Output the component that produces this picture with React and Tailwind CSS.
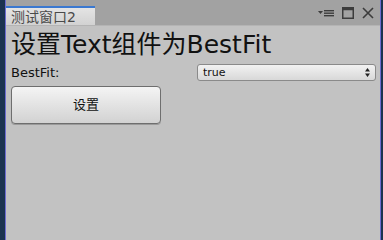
export default function App() {
  return (
    <div className="w-[383px] h-[240px] flex bg-[#1b3350] overflow-hidden" style={{ fontFamily: '"DejaVu Sans", "Noto Sans CJK SC", sans-serif' }}>
      <div className="w-[5px] shrink-0 bg-[#1b3350]" />
      <div className="w-[1px] shrink-0 bg-[#6c6cd0]" />
      <div className="flex-1 flex flex-col min-w-0">
        <div className="h-[25px] shrink-0 bg-[#a2a2a2] flex items-end relative">
          <div className="w-[89px] h-[19px] flex flex-col bg-gradient-to-b from-[#e6e6e6] to-[#d2d2d2]">
            <div className="h-[2px] bg-[#3a78d0]" />
            <div className="flex-1 flex items-center pl-[5px] text-[14px] leading-none text-[#4a4a4a]">测试窗口2</div>
          </div>
          <div className="absolute right-[6px] top-[7px] flex items-center gap-[8px]">
            <svg width="16" height="8" viewBox="0 0 16 8">
              <path d="M0 2 L5 2 L2.5 5 Z" fill="#3c3c3c" />
              <rect x="6" y="1" width="10" height="1.4" fill="#3c3c3c" />
              <rect x="6" y="3.5" width="10" height="1.4" fill="#3c3c3c" />
              <rect x="6" y="6" width="10" height="1.4" fill="#3c3c3c" />
            </svg>
            <svg width="12" height="12" viewBox="0 0 12 12">
              <rect x="0.75" y="0.75" width="10.5" height="10.5" fill="none" stroke="#3c3c3c" strokeWidth="1.5" />
              <rect x="0.75" y="0.75" width="10.5" height="2.5" fill="#3c3c3c" />
            </svg>
            <svg width="12" height="12" viewBox="0 0 12 12">
              <path d="M1 1 L11 11 M11 1 L1 11" stroke="#3c3c3c" strokeWidth="1.6" />
            </svg>
          </div>
        </div>
        <div className="h-[1px] bg-[#b4b4b4]" />
        <div className="flex-1 bg-[#c2c2c2] flex flex-col pl-[5px] pr-[4px]">
          <div className="mt-[5px] text-[25px] leading-[28px] text-[#111] whitespace-nowrap">设置Text组件为BestFit</div>
          <div className="mt-[4px] flex items-center h-[18px]">
            <div className="w-[186px] text-[13px] leading-none text-[#111]">BestFit:</div>
            <div className="flex-1 h-[17px] rounded-[3px] border border-[#8a8a8a] bg-gradient-to-b from-[#f2f2f2] to-[#d8d8d8] flex items-center px-[5px]">
              <span className="flex-1 text-[11px] leading-none text-[#111]">true</span>
              <svg width="5" height="9" viewBox="0 0 5 9">
                <path d="M2.5 0 L5 3.5 L0 3.5 Z M2.5 9 L5 5.5 L0 5.5 Z" fill="#222" />
              </svg>
            </div>
          </div>
          <div className="mt-[5px] w-[150px] h-[38px] rounded-[4px] border border-[#6e6e6e] bg-gradient-to-b from-[#f4f4f4] to-[#d2d2d2] flex items-center justify-center text-[13px] text-[#111] shadow-[0_1px_0_#9a9a9a]">
            设置
          </div>
        </div>
      </div>
      <div className="w-[1px] shrink-0 bg-[#6c6cd0]" />
      <div className="w-[2px] shrink-0 bg-[#1b3350]" />
    </div>
  );
}
